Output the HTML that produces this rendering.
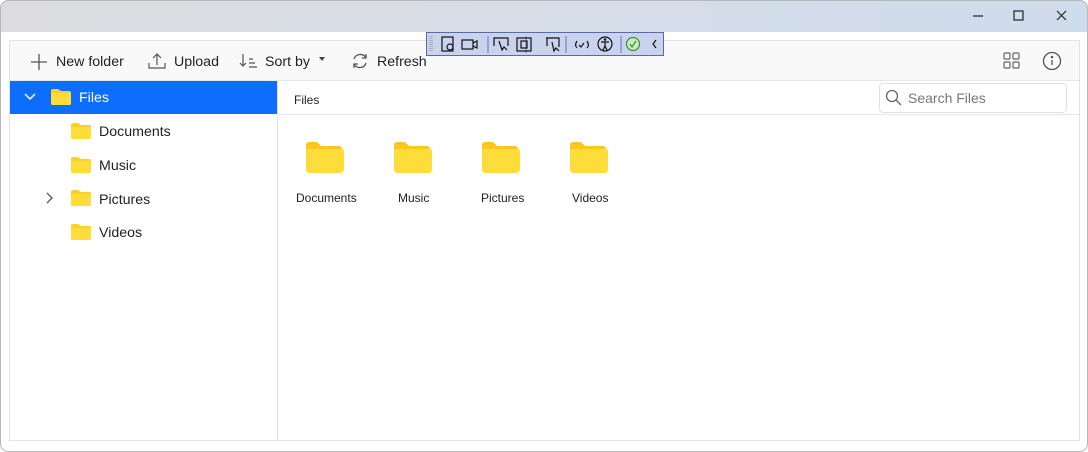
<!DOCTYPE html><html><head><style>
body{margin:0;width:1088px;height:452px;overflow:hidden;background:#fff;font-family:"Liberation Sans",sans-serif;position:relative}
.tb{position:absolute;left:0;top:0;width:1088px;height:32px;background:linear-gradient(90deg,#dcdcdf,#d4dde9 60%,#cfdcec);border-radius:8px 8px 0 0}
.win{position:absolute;left:0;top:0;width:1086px;height:450px;border:1px solid #b8b8b8;border-radius:8px}
.main{position:absolute;left:9px;top:40px;width:1069px;height:399px;border:1px solid #e3e3e3;background:#fff}
.bar{position:absolute;left:0;top:0;width:1069px;height:39px;background:#f9f9f9;border-bottom:1px solid #e6e6e6}
.t{position:absolute;font-size:14.2px;color:#222;white-space:nowrap}
.s{position:absolute;font-size:12px;color:#222}
.side{position:absolute;left:0;top:40px;width:267px;height:359px;border-right:1px solid #e0e0e0}
.sel{position:absolute;left:0;top:0;width:267px;height:33px;background:#0d6efd}
.hdr{position:absolute;left:268px;top:40px;width:801px;height:33px;border-bottom:1px solid #e6e6e6}
</style></head><body>
<div class="tb"></div><div class="win"></div>
<svg style="position:absolute;left:970px;top:8px" width="100" height="16" stroke="#222" fill="none" stroke-width="1.2"><path d="M3 8h10"/><rect x="44" y="3" width="9" height="9"/><path d="M87 3l9 9M96 3l-9 9"/></svg>
<div class="main">
<div class="bar"></div>
<svg style="position:absolute;left:20px;top:12px" width="18" height="18" stroke="#555" stroke-width="1.3"><path d="M9 1v16M1 9h16"/></svg>
<div class="t" style="left:46px;top:13px">New folder</div>
<svg style="position:absolute;left:137px;top:11px" width="20" height="18" stroke="#555" fill="none" stroke-width="1.2"><path d="M10 13V2M6 6l4-4 4 4M2 11v5h16v-5"/></svg>
<div class="t" style="left:164px;top:13px">Upload</div>
<svg style="position:absolute;left:229px;top:12px" width="20" height="16" stroke="#555" fill="none" stroke-width="1.2"><path d="M4 1v12M1 10l3 3 3-3M10 6h4M10 10h6M10 14h8"/></svg>
<div class="t" style="left:255px;top:13px">Sort by</div>
<div style="position:absolute;left:309px;top:16px;border:3px solid transparent;border-top:4px solid #444"></div>
<svg style="position:absolute;left:341px;top:11px" width="18" height="18" stroke="#555" fill="none" stroke-width="1.3"><path d="M3 7a6.5 6.5 0 0 1 12-1M15 2v4h-4M15 11a6.5 6.5 0 0 1-12 1M3 16v-4h4"/></svg>
<div class="t" style="left:367px;top:13px">Refresh</div>
<svg style="position:absolute;left:993px;top:11px" width="18" height="18" stroke="#666" fill="none" stroke-width="1.2"><rect x="1" y="1" width="6" height="6" rx="1"/><rect x="10" y="1" width="6" height="6" rx="1"/><rect x="1" y="10" width="6" height="6" rx="1"/><rect x="10" y="10" width="6" height="6" rx="1"/></svg>
<svg style="position:absolute;left:1032px;top:10px" width="20" height="20" stroke="#555" fill="none" stroke-width="1.3"><circle cx="10" cy="10" r="8.5"/><path d="M10 9v5"/><circle cx="10" cy="6" r=".6" fill="#555"/></svg>
<div class="side">
<div class="sel"></div>
<svg style="position:absolute;left:14px;top:12px" width="12" height="8" stroke="#fff" fill="none" stroke-width="1.5"><path d="M1 1l5 5 5-5"/></svg>
<svg style="position:absolute;left:40px;top:7px" width="22" height="18"><path d="M1 3a2 2 0 0 1 2-2h5l3 2h8a2 2 0 0 1 2 2v10a2 2 0 0 1-2 2H3a2 2 0 0 1-2-2z" fill="#fccf2a"/><rect x="1" y="5" width="20" height="12" rx="2" fill="#fedd3a"/></svg>
<div class="t" style="left:69px;top:9px;color:#fff">Files</div>
<svg style="position:absolute;left:60px;top:41px" width="22" height="18"><path d="M1 3a2 2 0 0 1 2-2h5l3 2h8a2 2 0 0 1 2 2v10a2 2 0 0 1-2 2H3a2 2 0 0 1-2-2z" fill="#fccf2a"/><rect x="1" y="5" width="20" height="12" rx="2" fill="#fedd3a"/></svg>
<div class="t" style="left:89px;top:43px">Documents</div>
<svg style="position:absolute;left:60px;top:75px" width="22" height="18"><path d="M1 3a2 2 0 0 1 2-2h5l3 2h8a2 2 0 0 1 2 2v10a2 2 0 0 1-2 2H3a2 2 0 0 1-2-2z" fill="#fccf2a"/><rect x="1" y="5" width="20" height="12" rx="2" fill="#fedd3a"/></svg>
<div class="t" style="left:89px;top:77px">Music</div>
<svg style="position:absolute;left:35px;top:111px" width="8" height="12" stroke="#555" fill="none" stroke-width="1.3"><path d="M2 1l5 5-5 5"/></svg>
<svg style="position:absolute;left:60px;top:108px" width="22" height="18"><path d="M1 3a2 2 0 0 1 2-2h5l3 2h8a2 2 0 0 1 2 2v10a2 2 0 0 1-2 2H3a2 2 0 0 1-2-2z" fill="#fccf2a"/><rect x="1" y="5" width="20" height="12" rx="2" fill="#fedd3a"/></svg>
<div class="t" style="left:89px;top:111px">Pictures</div>
<svg style="position:absolute;left:60px;top:142px" width="22" height="18"><path d="M1 3a2 2 0 0 1 2-2h5l3 2h8a2 2 0 0 1 2 2v10a2 2 0 0 1-2 2H3a2 2 0 0 1-2-2z" fill="#fccf2a"/><rect x="1" y="5" width="20" height="12" rx="2" fill="#fedd3a"/></svg>
<div class="t" style="left:89px;top:144px">Videos</div>
</div>
<div class="hdr">
<div class="s" style="left:16px;top:12px;font-size:12px">Files</div>
<div style="position:absolute;left:601px;top:2px;width:186px;height:28px;border:1px solid #e2e2e2;border-radius:4px"></div>
<svg style="position:absolute;left:607px;top:8px" width="18" height="18" stroke="#666" fill="none" stroke-width="1.3"><circle cx="7" cy="7" r="5.5"/><path d="M11 11l5 5"/></svg>
<div class="t" style="left:630px;top:9px;color:#777;font-size:14px">Search Files</div>
</div>
</div>
<svg style="position:absolute;left:0;top:0" width="1088" height="220">
<defs><g id="f"><path d="M0 3a3 3 0 0 1 3-3h8l4 4h18a3 3 0 0 1 3 3v20a4 4 0 0 1-4 4H4a4 4 0 0 1-4-4z" fill="#fcc81f"/><path d="M0 9a2 2 0 0 1 2-2h34a2 2 0 0 1 2 2v18a4 4 0 0 1-4 4H4a4 4 0 0 1-4-4z" fill="#fedd3a"/></g></defs>
<use href="#f" x="306" y="142"/><use href="#f" x="394" y="142"/><use href="#f" x="482" y="142"/><use href="#f" x="570" y="142"/>
</svg>
<div class="s" style="left:296px;top:191px">Documents</div>
<div class="s" style="left:398px;top:191px">Music</div>
<div class="s" style="left:481px;top:191px">Pictures</div>
<div class="s" style="left:572px;top:191px">Videos</div>
<div style="position:absolute;left:426px;top:32px;width:236px;height:22px;background:#c9d3ee;border:1px solid #5a6aa8"></div>
<svg style="position:absolute;left:426px;top:32px" width="238" height="24" stroke="#111" fill="none" stroke-width="1.2">
<path d="M4 4v16M6 4v16" stroke="#999" stroke-dasharray="1 1"/>
<rect x="16" y="5" width="11" height="14"/><circle cx="24" cy="15" r="3"/>
<rect x="36" y="8" width="11" height="9"/><path d="M47 11l4-2v7l-4-2"/>
<path d="M62 4v17M100 4v17M140 4v17M195 4v17" stroke="#7a86b8"/>
<path d="M68 14V6h14v8M73 9l3 9 2-3 3 3" /><rect x="93" y="6" width="14" height="13" transform="translate(-2 0)"/><rect x="95" y="9" width="6" height="7"/>
<path d="M120 6h13v9M121 6v8M126 10l2 9 2-3 3 3"/>
<path d="M151 9c-2 3-2 5 0 7M161 9c2 3 2 5 0 7M153 13l2 2 3-4"/>
<circle cx="179" cy="12" r="7"/><path d="M175 10h8M179 10v4l-2 4M179 14l2 4"/><circle cx="179" cy="7.5" r=".7"/>
<circle cx="207" cy="12" r="6.5" stroke="#2a9a2a" fill="#cfe9c6"/><path d="M204 12l2 3 4-6" stroke="#2a9a2a"/>
<path d="M230 8l-3 4 3 4"/></svg>
</body></html>
